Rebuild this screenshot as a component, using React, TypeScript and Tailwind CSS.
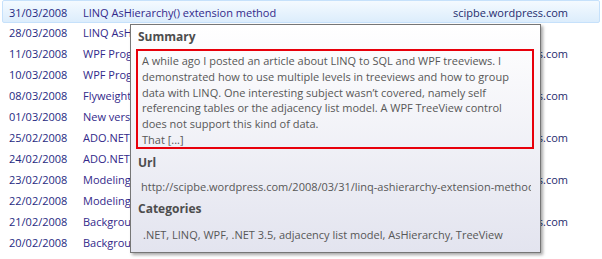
const rows = [
  { date: "31/03/2008", title: "LINQ AsHierarchy() extension method", site: "scipbe.wordpress.com" },
  { date: "28/03/2008", title: "LINQ AsHierarchy() extension method", site: "www.scip.be" },
  { date: "11/03/2008", title: "WPF ProgressBar in a ListView", site: "scipbe.wordpress.com" },
  { date: "10/03/2008", title: "WPF ProgressBar in a ListView", site: "www.scip.be" },
  { date: "08/03/2008", title: "Flyweight design pattern", site: "scipbe.wordpress.com" },
  { date: "01/03/2008", title: "New version of website", site: "www.scip.be" },
  { date: "25/02/2008", title: "ADO.NET Data Services", site: "scipbe.wordpress.com" },
  { date: "24/02/2008", title: "ADO.NET Data Services", site: "www.scip.be" },
  { date: "23/02/2008", title: "Modeling LINQ to SQL", site: "scipbe.wordpress.com" },
  { date: "22/02/2008", title: "Modeling LINQ to SQL", site: "www.scip.be" },
  { date: "21/02/2008", title: "BackgroundWorker", site: "scipbe.wordpress.com" },
  { date: "20/02/2008", title: "BackgroundWorker", site: "www.scip.be" },
];

const summary = [
  "A while ago I posted an article about LINQ to SQL and WPF treeviews. I",
  "demonstrated how to use multiple levels in treeviews and how to group",
  "data with LINQ. One interesting subject wasn\u2019t covered, namely self",
  "referencing tables or the adjacency list model. A WPF TreeView control",
  "does not support this kind of data.",
  "That [...]",
];

export default function App() {
  return (
    <div className="relative w-[602px] h-[259px] overflow-hidden bg-white font-['Open_Sans',sans-serif] text-[11px]">
      <div className="flex flex-col">
        {rows.map((r, i) => (
          <div
            key={i}
            className={
              i === 0
                ? "flex items-center h-[23px] pt-[3px] mx-[2px] rounded-[2px] border border-[#c6e1fb] bg-gradient-to-b from-[#f4faff] to-[#dcedfc]"
                : "flex items-center h-[21px] mx-[2px] border border-transparent"
            }
          >
            <span className="w-[80px] pl-[6px] text-[#1f2a82]">{r.date}</span>
            <span className="w-[370px] text-[#33298a] whitespace-nowrap">{r.title}</span>
            <span className="text-[#1f2d6e] whitespace-nowrap">{r.site}</span>
          </div>
        ))}
      </div>

      <div className="absolute left-[130px] top-[24px] w-[411px] h-[229px] border border-[#767676] bg-gradient-to-b from-white to-[#e3e4ef] shadow-[2px_2px_3px_rgba(0,0,0,0.35)] text-[#575757] overflow-hidden">
        <div className="flex items-center pl-[7px] h-[24px] font-bold text-[12px] text-[#4d4d4d]">Summary</div>
        <div className="ml-[5px] w-[398px] h-[100px] border-2 border-[#e8000b] pl-[4px] pt-[2px] leading-[15.8px] whitespace-nowrap">
          {summary.map((l, i) => (
            <div key={i}>{l}</div>
          ))}
        </div>
        <div className="flex items-center pl-[7px] h-[28px] font-bold text-[12px] text-[#4d4d4d]">Url</div>
        <div className="flex items-center pl-[10px] h-[20px] whitespace-nowrap overflow-hidden w-[400px]">
          http://scipbe.wordpress.com/2008/03/31/linq-ashierarchy-extension-method/
        </div>
        <div className="flex items-center pl-[7px] h-[24px] font-bold text-[12px] text-[#4d4d4d]">Categories</div>
        <div className="flex items-center pl-[12px] h-[28px] whitespace-nowrap">
          .NET, LINQ, WPF, .NET 3.5, adjacency list model, AsHierarchy, TreeView
        </div>
      </div>
    </div>
  );
}
